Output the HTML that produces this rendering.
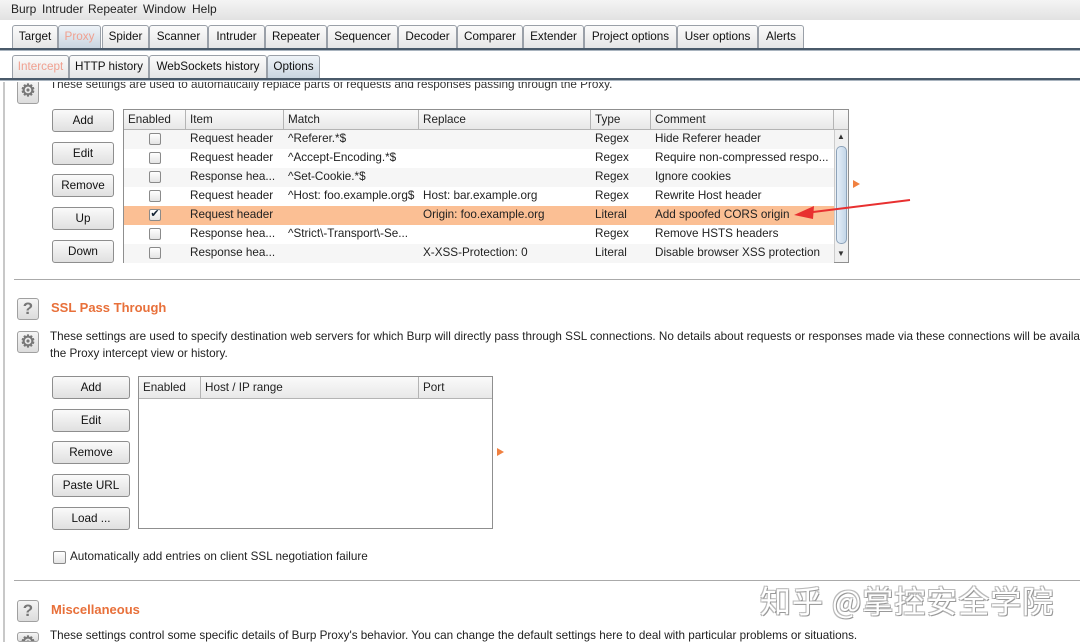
<!DOCTYPE html>
<html><head><meta charset="utf-8"><style>
*{box-sizing:border-box}
html,body{overflow:hidden}
body{margin:0;width:1080px;height:642px;overflow:hidden;background:#fff;font-family:"Liberation Sans",Arial,sans-serif;font-size:11.7px;color:#222;position:relative}
.a{position:absolute}
.menu{left:0;top:0;width:1080px;height:20px;background:linear-gradient(#f4f4f4,#e2e2e2);}
.menu span{position:absolute;top:2px;font-size:12px}
.tabbar{left:0;top:20px;width:1080px;height:62px;background:#fff}
.tab{position:absolute;height:23px;border:1px solid #9aa0a8;border-bottom:none;border-radius:3px 3px 0 0;background:linear-gradient(#fbfbfb,#e6e6e6);font-size:11.7px;text-align:center;line-height:22px;color:#111}
.sel{background:linear-gradient(#eef3f8,#c9d5e0)}
.line{position:absolute;left:0;width:1080px;height:3px;background:#4a5a6a;border-bottom:1px solid #a9b4bf}
.btn{position:absolute;height:23px;border:1px solid #8e8e8e;border-radius:3px;background:linear-gradient(#fafafa,#e0e0e0);text-align:center;line-height:21px;font-size:11.7px;color:#111}
.icon{position:absolute;width:22px;height:22px;border:1px solid #a0a0a0;border-radius:3px;background:linear-gradient(#f5f5f5,#dcdcdc);text-align:center;color:#777;font-weight:bold;font-size:17px;line-height:20px}
.tbl{position:absolute;border:1px solid #8f8f8f;background:#fff}
.hd{position:absolute;top:0;height:20px;border-right:1px solid #b4b4b4;background:linear-gradient(#fafafa,#e8e8e8);border-bottom:1px solid #b4b4b4;padding-left:4px;line-height:19px}
.row{position:absolute;left:0;height:19px;line-height:18px}
.row span{position:absolute;top:0;white-space:nowrap}
.cb{position:absolute;width:12px;height:12px;border:1px solid #8a8a8a;border-radius:2px;background:linear-gradient(#fff,#e4e4e4)}
.h2{position:absolute;color:#e8703a;font-weight:bold;font-size:13px}
.sep{position:absolute;left:14px;width:1066px;height:1px;background:#aaa}
</style></head><body>
<div class="a menu"><span style="left:11px">Burp</span><span style="left:42px">Intruder</span><span style="left:88px">Repeater</span><span style="left:143px">Window</span><span style="left:192px">Help</span></div>
<div class="a tabbar"></div>
<div class="tab" style="left:12px;top:25px;width:46px">Target</div>
<div class="tab sel" style="left:58px;top:25px;width:43px;color:#f0a090">Proxy</div>
<div class="tab" style="left:102px;top:25px;width:47px">Spider</div>
<div class="tab" style="left:149px;top:25px;width:59px">Scanner</div>
<div class="tab" style="left:208px;top:25px;width:57px">Intruder</div>
<div class="tab" style="left:265px;top:25px;width:62px">Repeater</div>
<div class="tab" style="left:327px;top:25px;width:71px">Sequencer</div>
<div class="tab" style="left:398px;top:25px;width:59px">Decoder</div>
<div class="tab" style="left:457px;top:25px;width:66px">Comparer</div>
<div class="tab" style="left:523px;top:25px;width:61px">Extender</div>
<div class="tab" style="left:584px;top:25px;width:93px">Project options</div>
<div class="tab" style="left:677px;top:25px;width:81px">User options</div>
<div class="tab" style="left:758px;top:25px;width:46px">Alerts</div>
<div class="line" style="top:48px"></div>
<div class="tab" style="left:12px;top:55px;width:57px;color:#f0a090">Intercept</div>
<div class="tab" style="left:69px;top:55px;width:80px">HTTP history</div>
<div class="tab" style="left:149px;top:55px;width:118px">WebSockets history</div>
<div class="tab sel" style="left:267px;top:55px;width:53px">Options</div>
<div class="a" style="left:3px;top:82px;width:2px;height:560px;background:#c8c8c8"></div>

<div class="icon" style="left:17px;top:80px;height:24px">⚙</div>
<div class="a" style="left:50px;top:78px;color:#333">These settings are used to automatically replace parts of requests and responses passing through the Proxy.</div>
<div class="a" style="left:0;top:78px;width:1080px;height:4px;background:#fff"></div>
<div class="line" style="top:78px"></div>

<div class="btn" style="left:52px;top:109px;width:62px">Add</div>
<div class="btn" style="left:52px;top:142px;width:62px">Edit</div>
<div class="btn" style="left:52px;top:174px;width:62px">Remove</div>
<div class="btn" style="left:52px;top:207px;width:62px">Up</div>
<div class="btn" style="left:52px;top:240px;width:62px">Down</div>

<div class="tbl" style="left:123px;top:109px;width:726px;height:154px">
<div class="hd" style="left:0;width:62px">Enabled</div>
<div class="hd" style="left:62px;width:98px">Item</div>
<div class="hd" style="left:160px;width:135px">Match</div>
<div class="hd" style="left:295px;width:172px">Replace</div>
<div class="hd" style="left:467px;width:60px">Type</div>
<div class="hd" style="left:527px;width:183px">Comment</div>
<div class="hd" style="left:710px;width:14px;border-right:none"></div>
<div class="row" style="top:20px;width:710px;background:#f6f6f6"><i class="cb" style="left:25px;top:3px"></i><span style="left:66px">Request header</span><span style="left:164px">^Referer.*$</span><span style="left:471px">Regex</span><span style="left:531px">Hide Referer header</span></div>
<div class="row" style="top:39px;width:710px"><i class="cb" style="left:25px;top:3px"></i><span style="left:66px">Request header</span><span style="left:164px">^Accept-Encoding.*$</span><span style="left:471px">Regex</span><span style="left:531px">Require non-compressed respo...</span></div>
<div class="row" style="top:58px;width:710px;background:#f6f6f6"><i class="cb" style="left:25px;top:3px"></i><span style="left:66px">Response hea...</span><span style="left:164px">^Set-Cookie.*$</span><span style="left:471px">Regex</span><span style="left:531px">Ignore cookies</span></div>
<div class="row" style="top:77px;width:710px"><i class="cb" style="left:25px;top:3px"></i><span style="left:66px">Request header</span><span style="left:164px">^Host: foo.example.org$</span><span style="left:299px">Host: bar.example.org</span><span style="left:471px">Regex</span><span style="left:531px">Rewrite Host header</span></div>
<div class="row" style="top:96px;width:710px;background:#fbbf94"><i class="cb" style="left:25px;top:3px;font-size:11px;line-height:9px;font-style:normal;color:#123;text-align:center">✔</i><span style="left:66px">Request header</span><span style="left:299px">Origin: foo.example.org</span><span style="left:471px">Literal</span><span style="left:531px">Add spoofed CORS origin</span></div>
<div class="row" style="top:115px;width:710px"><i class="cb" style="left:25px;top:3px"></i><span style="left:66px">Response hea...</span><span style="left:164px">^Strict\-Transport\-Se...</span><span style="left:471px">Regex</span><span style="left:531px">Remove HSTS headers</span></div>
<div class="row" style="top:134px;width:710px;background:#f6f6f6"><i class="cb" style="left:25px;top:3px"></i><span style="left:66px">Response hea...</span><span style="left:299px">X-XSS-Protection: 0</span><span style="left:471px">Literal</span><span style="left:531px">Disable browser XSS protection</span></div>
<div class="a" style="left:710px;top:20px;width:14px;height:132px;background:#f0f0f0;border-left:1px solid #ccc"></div>
<div class="a" style="left:712px;top:36px;width:11px;height:98px;border:1px solid #8da3ba;border-radius:5px;background:linear-gradient(90deg,#e4eef8,#c4d6e8)"></div>
<div class="a" style="left:713px;top:22px;font-size:8px;color:#333">▲</div>
<div class="a" style="left:713px;top:139px;font-size:8px;color:#333">▼</div>
</div>
<div class="a" style="left:853px;top:180px;width:0;height:0;border-left:7px solid #f08040;border-top:4px solid transparent;border-bottom:4px solid transparent"></div>
<svg class="a" style="left:780px;top:195px" width="140" height="30"><line x1="130" y1="5" x2="25" y2="18" stroke="#e83030" stroke-width="2"/><polygon points="14,20 34,11 33,24" fill="#e83030"/></svg>

<div class="sep" style="top:279px"></div>
<div class="icon" style="left:17px;top:298px">?</div>
<div class="h2" style="left:51px;top:300px">SSL Pass Through</div>
<div class="icon" style="left:17px;top:331px">⚙</div>
<div class="a" style="left:50px;top:328px;line-height:17px;width:1030px;overflow:hidden;white-space:nowrap">These settings are used to specify destination web servers for which Burp will directly pass through SSL connections. No details about requests or responses made via these connections will be available in<br>the Proxy intercept view or history.</div>
<div class="btn" style="left:52px;top:376px;width:78px">Add</div>
<div class="btn" style="left:52px;top:409px;width:78px">Edit</div>
<div class="btn" style="left:52px;top:441px;width:78px">Remove</div>
<div class="btn" style="left:52px;top:474px;width:78px">Paste URL</div>
<div class="btn" style="left:52px;top:507px;width:78px">Load ...</div>
<div class="tbl" style="left:138px;top:376px;width:355px;height:153px">
<div class="hd" style="left:0;width:62px;height:22px;line-height:21px">Enabled</div>
<div class="hd" style="left:62px;width:218px;height:22px;line-height:21px">Host / IP range</div>
<div class="hd" style="left:280px;width:73px;height:22px;line-height:21px;border-right:none">Port</div>
</div>
<div class="a" style="left:497px;top:448px;width:0;height:0;border-left:7px solid #f08040;border-top:4px solid transparent;border-bottom:4px solid transparent"></div>
<i class="cb" style="left:53px;top:551px;width:13px;height:13px"></i>
<div class="a" style="left:70px;top:550px">Automatically add entries on client SSL negotiation failure</div>
<div class="sep" style="top:580px"></div>
<div class="icon" style="left:17px;top:600px">?</div>
<div class="h2" style="left:51px;top:602px">Miscellaneous</div>
<div class="icon" style="left:17px;top:632px;height:10px;overflow:hidden">⚙</div>
<div class="a" style="left:50px;top:629px;white-space:nowrap">These settings control some specific details of Burp Proxy's behavior. You can change the default settings here to deal with particular problems or situations.</div>
<div class="a" style="left:760px;top:577px;font-family:'Noto Sans CJK SC',sans-serif;font-size:31px;color:#fff;letter-spacing:1px;white-space:nowrap;text-shadow:1px 1px 0 #999,-1px -1px 0 #bbb,1px -1px 0 #bbb,-1px 1px 0 #bbb">知乎 @掌控安全学院</div>
</body></html>
